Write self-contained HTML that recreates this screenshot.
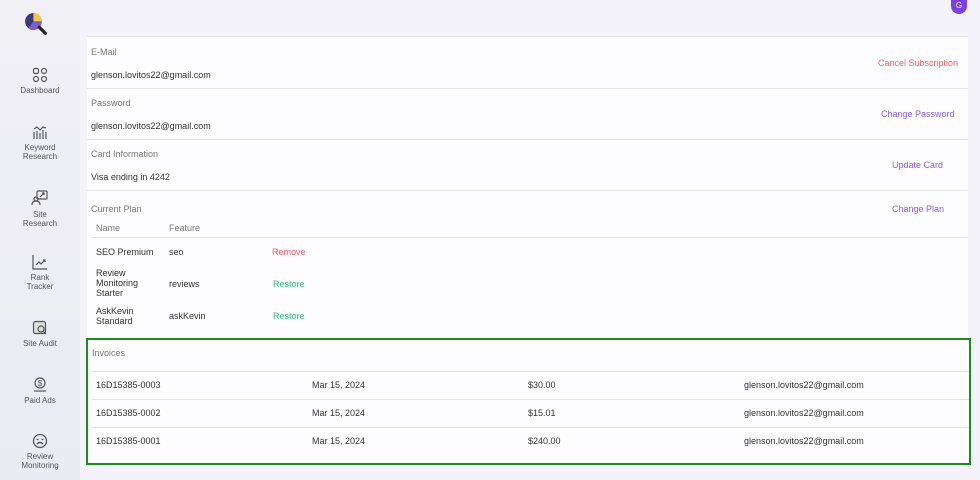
<!DOCTYPE html>
<html><head><meta charset="utf-8"><style>
*{margin:0;padding:0;box-sizing:border-box}
body{width:980px;height:480px;overflow:hidden;background:#f3f3f9;font-family:"Liberation Sans",sans-serif;position:relative;color:#333}
.a{position:absolute;white-space:nowrap}
.side{position:absolute;left:0;top:0;width:80px;height:480px;background:linear-gradient(#f0f0f5,#ebebf4)}
.nav{position:absolute;left:0;width:80px;text-align:center;font-size:8px;color:#555;line-height:9px}
.nav svg{display:block;margin:0 auto 3px}
.panel{position:absolute;left:87px;top:36px;width:881px;height:304px;background:#fdfdff;border-top:1px solid #e2e2ea}
.hr{position:absolute;height:1px;background:#e3e3ea}
.lbl{font-size:9px;color:#777}
.val{font-size:9px;color:#333}
.red{color:#f0665e;font-size:9px}
.pur{color:#8a5cf0;font-size:9px}
.grn{color:#2fc472;font-size:9px}
</style></head><body>
<div class="side">
<svg class="a" style="left:23px;top:11px" width="25" height="25" viewBox="0 0 24 24"><circle cx="10" cy="10" r="8" fill="#3d3a7a"/><path d="M10 10V2a8 8 0 0 1 8 8z" fill="#f4c64a"/><path d="M10 10L18 10A8 8 0 0 1 5 16.5z" fill="#7b5fcf"/><path d="M15.5 15.5l6 6" stroke="#222" stroke-width="3" stroke-linecap="round"/></svg>
<div class="nav" style="top:67px"><svg width="16" height="16" viewBox="0 0 16 16" fill="none" stroke="#555" stroke-width="1.2"><rect x="1.5" y="1.5" width="5" height="5" rx="1.5"/><rect x="9.5" y="1.5" width="5" height="5" rx="2.5"/><rect x="1.5" y="9.5" width="5" height="5" rx="2.5"/><rect x="9.5" y="9.5" width="5" height="5" rx="2.5"/></svg>Dashboard</div>
<div class="nav" style="top:124px"><svg width="16" height="16" viewBox="0 0 16 16" fill="none" stroke="#555" stroke-width="1.2"><path d="M2 15V8M5 15V7M8 15V9M11 15V6M14 15V8M2 5l3-2 3 3 3-3 3 1"/></svg>Keyword<br>Research</div>
<div class="nav" style="top:189px"><svg width="18" height="18" viewBox="0 0 18 18" fill="none" stroke="#555" stroke-width="1.2"><rect x="6" y="2" width="10" height="8" rx="1"/><path d="M9 8l4-4M11 4h2v2"/><circle cx="5" cy="10" r="2"/><path d="M1 16c0-3 2-4 4-4s4 1 4 4"/></svg>Site<br>Research</div>
<div class="nav" style="top:254px"><svg width="16" height="16" viewBox="0 0 16 16" fill="none" stroke="#555" stroke-width="1.2"><path d="M1 1v14h14M4 11l3-3 2 2 4-4M11 6h2v2"/></svg>Rank<br>Tracker</div>
<div class="nav" style="top:320px"><svg width="16" height="16" viewBox="0 0 16 16" fill="none" stroke="#555" stroke-width="1.2"><rect x="1.5" y="1.5" width="12" height="12" rx="2" fill="#ddd"/><circle cx="9" cy="9" r="3"/><path d="M11 11l3 3"/></svg>Site Audit</div>
<div class="nav" style="top:377px"><svg width="16" height="16" viewBox="0 0 16 16" fill="none" stroke="#555" stroke-width="1.2"><circle cx="8" cy="6" r="5"/><text x="8" y="9" font-size="8" text-anchor="middle" fill="#555" stroke="none" font-family="Liberation Sans">$</text><path d="M2 14h12"/></svg>Paid Ads</div>
<div class="nav" style="top:433px"><svg width="16" height="16" viewBox="0 0 16 16" fill="none" stroke="#555" stroke-width="1.3"><circle cx="8" cy="8" r="6.5"/><path d="M4.5 6.5h2M9.5 6.5h2M5 11c2-2 4-2 6 0"/></svg>Review<br>Monitoring</div>
</div>
<div class="a" style="left:951px;top:0;width:16px;height:14px;border-radius:0 0 8px 8px;background:#7b3fe4;color:#fff;font-size:8px;text-align:center;line-height:12px">G</div>
<div class="panel">
<div class="a lbl" style="left:4px;top:10px">E-Mail</div>
<div class="a val" style="left:4px;top:33px">glenson.lovitos22@gmail.com</div>
<div class="a red" style="left:791px;top:21px">Cancel Subscription</div>
<div class="hr" style="left:0;width:881px;top:51px"></div>
<div class="a lbl" style="left:4px;top:61px">Password</div>
<div class="a val" style="left:4px;top:84px">glenson.lovitos22@gmail.com</div>
<div class="a pur" style="left:794px;top:72px">Change Password</div>
<div class="hr" style="left:0;width:881px;top:102px"></div>
<div class="a lbl" style="left:4px;top:112px">Card Information</div>
<div class="a val" style="left:4px;top:135px">Visa ending in 4242</div>
<div class="a pur" style="left:805px;top:123px">Update Card</div>
<div class="hr" style="left:0;width:881px;top:153px"></div>
<div class="a lbl" style="left:4px;top:167px">Current Plan</div>
<div class="a pur" style="left:805px;top:167px">Change Plan</div>
<div class="a lbl" style="left:9px;top:186px">Name</div>
<div class="a lbl" style="left:82px;top:186px">Feature</div>
<div class="hr" style="left:4px;width:877px;top:200px"></div>
<div class="a val" style="left:9px;top:210px">SEO Premium</div>
<div class="a val" style="left:82px;top:210px">seo</div>
<div class="a red" style="left:185px;top:210px">Remove</div>
<div class="a val" style="left:9px;top:231px;line-height:10px;white-space:normal">Review<br>Monitoring<br>Starter</div>
<div class="a val" style="left:82px;top:242px">reviews</div>
<div class="a grn" style="left:186px;top:242px">Restore</div>
<div class="a val" style="left:9px;top:269px;line-height:10px">AskKevin<br>Standard</div>
<div class="a val" style="left:82px;top:274px">askKevin</div>
<div class="a grn" style="left:186px;top:274px">Restore</div>
</div>
<div class="a" style="left:86px;top:338px;width:885px;height:127px;border:2px solid #1f8a24;background:#fdfdff">
<div class="a lbl" style="left:4px;top:8px">Invoices</div>
<div class="hr" style="left:4px;width:877px;top:31px"></div>
<div class="a val" style="left:8px;top:40px">16D15385-0003</div><div class="a val" style="left:224px;top:40px">Mar 15, 2024</div><div class="a val" style="left:440px;top:40px">$30.00</div><div class="a val" style="left:656px;top:40px">glenson.lovitos22@gmail.com</div>
<div class="hr" style="left:4px;width:877px;top:59px"></div>
<div class="a val" style="left:8px;top:68px">16D15385-0002</div><div class="a val" style="left:224px;top:68px">Mar 15, 2024</div><div class="a val" style="left:440px;top:68px">$15.01</div><div class="a val" style="left:656px;top:68px">glenson.lovitos22@gmail.com</div>
<div class="hr" style="left:4px;width:877px;top:87px"></div>
<div class="a val" style="left:8px;top:96px">16D15385-0001</div><div class="a val" style="left:224px;top:96px">Mar 15, 2024</div><div class="a val" style="left:440px;top:96px">$240.00</div><div class="a val" style="left:656px;top:96px">glenson.lovitos22@gmail.com</div>
</div>
</body></html>
